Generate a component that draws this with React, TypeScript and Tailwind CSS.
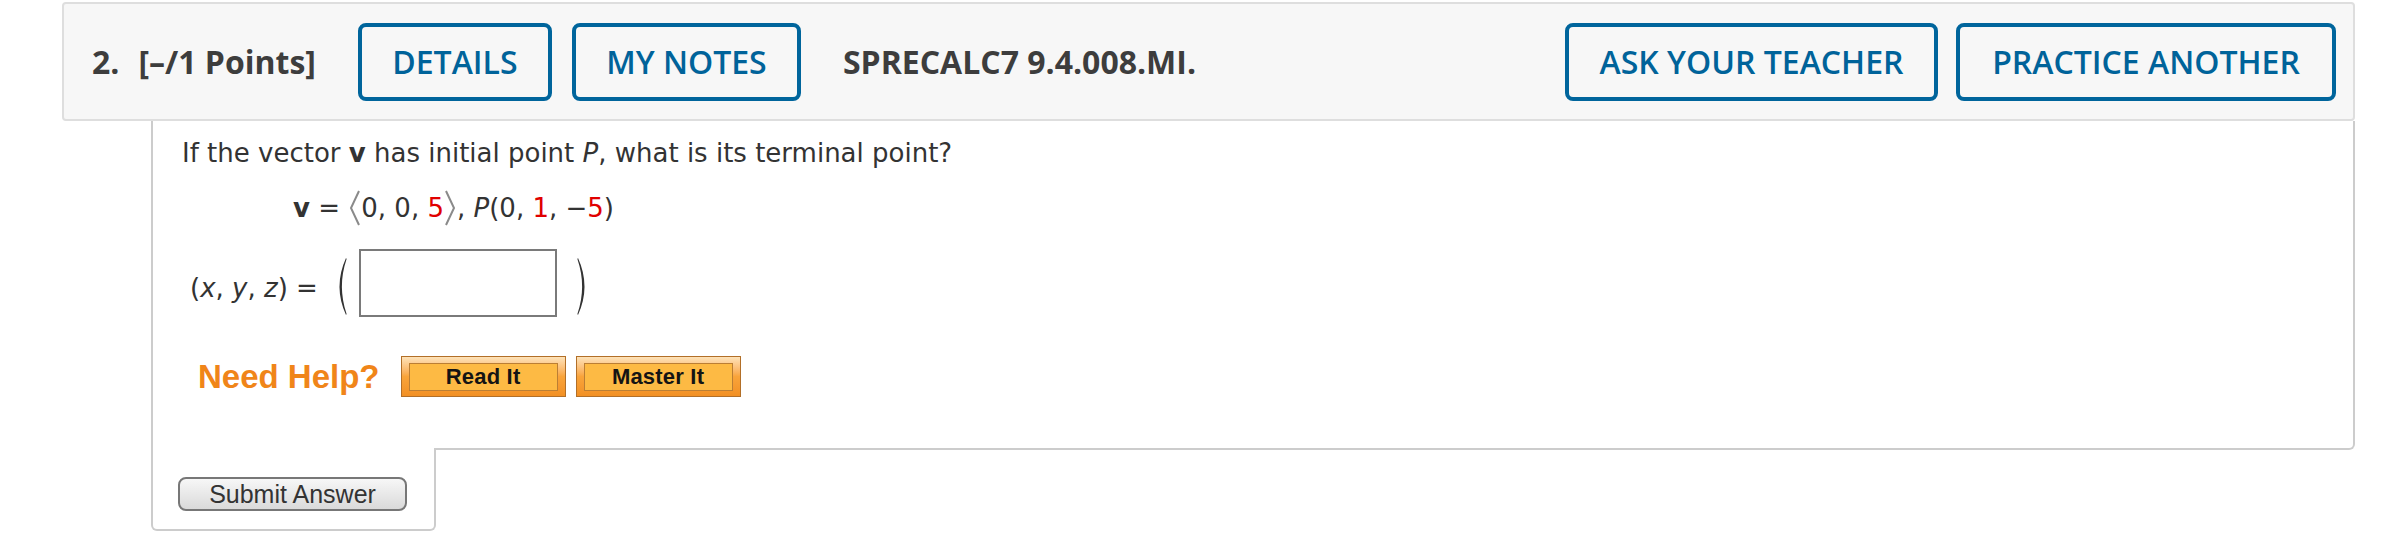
import React from "react";

const openSans = { fontFamily: '"Open Sans", "Liberation Sans", sans-serif' } as const;
const verdana = { fontFamily: '"DejaVu Sans", Verdana, sans-serif' } as const;
const arial = { fontFamily: '"Liberation Sans", Arial, sans-serif' } as const;

function HeaderButton({ label, w }: { label: string; w: string }) {
  return (
    <div
      className={`${w} h-[78px] flex items-center justify-center rounded-[8px] border-[4px] border-[#00659c] text-[#00639a] text-[32px] font-semibold bg-[#f7f7f7] whitespace-nowrap`}
      style={openSans}
    >
      {label}
    </div>
  );
}

function HelpButton({ label, size }: { label: string; size: string }) {
  return (
    <div className="w-[165px] h-[41px] border-[1.5px] border-[#b26f28] bg-linear-to-b from-[#fde2b8] via-[#f9a43a] to-[#f29024] pt-[6px] pb-[5px] px-[7px] flex">
      <div
        className={`flex-1 flex items-center justify-center border border-[#bb7e34] bg-[#fdba44] text-[#141414] font-bold ${size} leading-none tracking-[0.2px]`}
        style={arial}
      >
        {label}
      </div>
    </div>
  );
}

function AngleL() {
  return (
    <svg width="13" height="36" viewBox="0 0 13 36" className="shrink-0">
      <polyline points="11,1 3,18 11,35" fill="none" stroke="#8a8a8a" strokeWidth="2" />
    </svg>
  );
}
function AngleR() {
  return (
    <svg width="13" height="36" viewBox="0 0 13 36" className="shrink-0">
      <polyline points="2,1 10,18 2,35" fill="none" stroke="#8a8a8a" strokeWidth="2" />
    </svg>
  );
}

function ParenL() {
  return (
    <svg width="14" height="57" viewBox="0 0 14 57" className="shrink-0 mt-[9px]">
      <path d="M13 0 Q0 28.5 13 57 L13.6 56 Q4.2 28.5 13.6 1 Z" fill="#333" />
    </svg>
  );
}
function ParenR() {
  return (
    <svg width="14" height="57" viewBox="0 0 14 57" className="shrink-0 mt-[9px]">
      <path d="M1 0 Q14 28.5 1 57 L0.4 56 Q9.8 28.5 0.4 1 Z" fill="#333" />
    </svg>
  );
}

export default function App() {
  return (
    <div className="w-[2388px] h-[537px] bg-white overflow-hidden">
      {/* Header */}
      <div className="ml-[62px] mr-[33px] mt-[2px] h-[119px] border-2 border-[#dedede] rounded-[4px] bg-[#f7f7f7] flex items-center pl-[28px] pr-[17px] text-[#3d3d3d]">
        <span className="text-[32px] font-bold whitespace-nowrap" style={openSans}>2.</span>
        <span className="ml-[19px] text-[32px] font-bold whitespace-nowrap" style={openSans}>[–/1 Points]</span>
        <div className="ml-[42px] flex gap-[20px]">
          <HeaderButton label="DETAILS" w="w-[194px]" />
          <HeaderButton label="MY NOTES" w="w-[229px]" />
        </div>
        <span className="ml-[42px] text-[32px] font-bold whitespace-nowrap" style={openSans}>SPRECALC7 9.4.008.MI.</span>
        <div className="ml-auto flex gap-[18px]">
          <HeaderButton label="ASK YOUR TEACHER" w="w-[373px]" />
          <HeaderButton label="PRACTICE ANOTHER" w="w-[380px]" />
        </div>
      </div>

      {/* Body */}
      <div className="ml-[151px] mr-[33px]">
        <div className="h-[329px] border-x-2 border-b-2 border-[#cccccc] rounded-br-[6px] pl-[29px] pt-[16px] text-[#333]" style={verdana}>
          <div className="text-[26px] leading-[32px] whitespace-nowrap">
            If the vector <b>v</b> has initial point <i>P</i>, what is its terminal point?
          </div>

          <div className="mt-[23px] ml-[111px] h-[32px] flex items-center text-[26px] leading-[32px] whitespace-pre">
            <b>v</b>
            <span> = </span>
            <AngleL />
            <span>0, 0, </span>
            <span className="text-[#e00000]">5</span>
            <AngleR />
            <span>, </span>
            <i>P</i>
            <span>(0, </span>
            <span className="text-[#e00000]">1</span>
            <span>, −</span>
            <span className="text-[#e00000]">5</span>
            <span>)</span>
          </div>

          <div className="mt-[25px] h-[68px] flex items-start">
            <div className="ml-[8px] w-[143px] mt-[23px] text-[26px] leading-[32px] whitespace-pre">
              (<i>x</i>, <i>y</i>, <i>z</i>) =
            </div>
            <ParenL />
            <div className="ml-[12px] w-[198px] h-[68px] border-2 border-[#7a7a7a] bg-white" />
            <div className="ml-[20px]">
              <ParenR />
            </div>
          </div>

          <div className="mt-[39px] h-[41px] flex items-center">
            <span className="ml-[16px] text-[33px] leading-[41px] font-bold text-[#f08519] whitespace-nowrap" style={arial}>
              Need Help?
            </span>
            <div className="ml-[21px] flex gap-[10px]">
              <HelpButton label="Read It" size="text-[22px]" />
              <HelpButton label="Master It" size="text-[22px]" />
            </div>
          </div>
        </div>

        <div className="-mt-[2px] w-[285px] h-[83px] border-x-2 border-b-2 border-[#cccccc] rounded-b-[6px] bg-white pl-[25px] pt-[29px]">
          <div
            className="w-[229px] h-[34px] rounded-[8px] border-2 border-[#777] bg-linear-to-b from-[#f7f7f7] to-[#dadada] flex items-center justify-center text-[25px] text-[#333] leading-none"
            style={arial}
          >
            Submit Answer
          </div>
        </div>
      </div>
    </div>
  );
}
